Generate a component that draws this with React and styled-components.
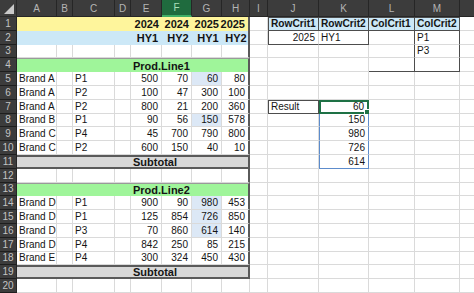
import React from 'react';
import styled, { createGlobalStyle } from 'styled-components';

const GlobalStyle = createGlobalStyle`
  html, body {
    margin: 0;
    padding: 0;
    background: #ffffff;
    overflow: hidden;
  }
  body {
    font-family: "Liberation Sans", Arial, sans-serif;
  }
`;

const COLS = ['A', 'B', 'C', 'D', 'E', 'F', 'G', 'H', 'I', 'J', 'K', 'L', 'M', 'N'];
const WIDTHS = [17, 40, 16, 42, 16, 31, 30, 30, 28, 18, 51, 50, 46, 45, 40];

const YELLOW = '#fef59c';
const BLUE = '#cce8f7';
const GREEN = '#9ff59a';
const GRAY = '#d8d8d8';
const HILITE = '#dce8f6';
const GRID = '1px solid #dadada';
const LINE = '1px solid #4d4d4d';
const THICK = '2px solid #5a5a5a';
const SEL = '2px solid #1e7145';
const RANGE = '1px solid #5d8ccc';

const Sheet = styled.div`
  display: grid;
  grid-template-columns: ${WIDTHS.map(w => `${w}px`).join(' ')};
  grid-template-rows: 17px repeat(20, 13.8px);
  width: 500px;
  font-size: 10px;
  color: #141414;
`;

const Corner = styled.div`
  position: relative;
  background: #3c3c3c;
  border-right: 1px solid #2a2a2a;
  border-bottom: 1px solid #2a2a2a;
  &::after {
    content: '';
    position: absolute;
    right: 2px;
    bottom: 2px;
    border-left: 10px solid transparent;
    border-bottom: 10px solid #c9c9c9;
  }
`;

const ColHead = styled.div`
  display: flex;
  align-items: center;
  justify-content: center;
  background: ${p => (p.$active ? '#1f6b3e' : '#3c3c3c')};
  color: ${p => (p.$active ? '#a9dfb9' : '#b4b4b4')};
  border-right: 1px solid #262626;
  border-bottom: ${p => (p.$active ? '2px solid #3fae66' : '1px solid #262626')};
  font-size: 10px;
  box-sizing: border-box;
`;

const RowHead = styled.div`
  display: flex;
  align-items: center;
  justify-content: center;
  background: #3c3c3c;
  color: #c3c3c3;
  border-right: 1px solid #262626;
  border-bottom: 1px solid #1e1e1e;
  font-size: 10px;
  box-sizing: border-box;
`;

const Cell = styled.div`
  position: relative;
  grid-column: span ${p => p.$span || 1};
  display: flex;
  align-items: center;
  justify-content: ${p => (p.$align === 'right' ? 'flex-end' : p.$align === 'center' ? 'center' : 'flex-start')};
  padding: ${p => (p.$align === 'right' ? '0 3px 0 0' : '0 0 0 2px')};
  background: ${p => p.$bg || '#ffffff'};
  font-weight: ${p => (p.$bold ? 700 : 400)};
  font-size: ${p => p.$size || (p.$bold ? '11px' : '10px')};
  white-space: nowrap;
  overflow: visible;
  box-sizing: border-box;
  border-top: ${p => p.$bt || 'none'};
  border-left: ${p => p.$bl || 'none'};
  border-right: ${p => p.$br || (p.$bg && p.$bg !== HILITE ? 'none' : GRID)};
  border-bottom: ${p => p.$bb || (p.$bg && p.$bg !== HILITE ? 'none' : GRID)};
`;

const Handle = styled.span`
  position: absolute;
  right: -3px;
  bottom: -3px;
  width: 4px;
  height: 4px;
  background: #1e7145;
  border: 1px solid #ffffff;
`;

const blank = (n = 1) => Array.from({ length: n }, () => ({}));

const crit = (t, first) => ({
  t, bold: true, size: '10.2px', bg: BLUE, bt: LINE, br: LINE, bb: LINE, bl: first ? LINE : undefined,
});

const headerRight = {
  1: [crit('RowCrit1', true), crit('RowCrit2'), crit('ColCrit1'), crit('ColCrit2')],
  2: [
    { t: '2025', align: 'right', bl: LINE, bb: LINE },
    { t: 'HY1', br: LINE, bb: LINE },
    { br: LINE },
    { t: 'P1', br: LINE },
  ],
  3: [{}, {}, { br: LINE }, { t: 'P3', br: LINE }],
  4: [{}, {}, { br: LINE, bb: LINE }, { br: LINE, bb: LINE }],
  7: [
    { t: 'Result', bt: LINE, bl: LINE, bb: LINE, br: LINE },
    { t: '60', align: 'right', sel: true, bt: SEL, bl: SEL, br: SEL, bb: SEL },
    {},
    {},
  ],
  8: [{}, { t: '150', align: 'right', bl: RANGE, br: RANGE }, {}, {}],
  9: [{}, { t: '980', align: 'right', bl: RANGE, br: RANGE }, {}, {}],
  10: [{}, { t: '726', align: 'right', bl: RANGE, br: RANGE }, {}, {}],
  11: [{}, { t: '614', align: 'right', bl: RANGE, br: RANGE, bb: RANGE }, {}, {}],
};

const dataRow = ([brand, prod, e, f, g, h], gHi) => [
  { t: brand },
  {},
  { t: prod },
  {},
  { t: e, align: 'right' },
  { t: f, align: 'right' },
  { t: g, align: 'right', bg: gHi ? HILITE : undefined },
  { t: h, align: 'right', br: THICK },
];

const bandRow = (bg, text, borders = {}) => [
  { span: 4, bg, ...borders },
  { span: 4, bg, t: text, bold: true, br: THICK, ...borders },
];

const tableLeft = {
  1: [
    { span: 4, bg: YELLOW },
    { t: '2024', bold: true, align: 'right', bg: YELLOW },
    { t: '2024', bold: true, align: 'right', bg: YELLOW },
    { t: '2025', bold: true, align: 'right', bg: YELLOW },
    { t: '2025', bold: true, align: 'right', bg: YELLOW, br: THICK },
  ],
  2: [
    { span: 4, bg: BLUE },
    { t: 'HY1', bold: true, align: 'center', bg: BLUE },
    { t: 'HY2', bold: true, align: 'center', bg: BLUE },
    { t: 'HY1', bold: true, align: 'center', bg: BLUE },
    { t: 'HY2', bold: true, align: 'center', bg: BLUE, br: THICK },
  ],
  3: [...blank(7), { br: THICK }],
  4: bandRow(GREEN, 'Prod.Line1', { bt: '1px solid #9a9a9a' }),
  5: dataRow(['Brand A', 'P1', '500', '70', '60', '80'], true),
  6: dataRow(['Brand A', 'P2', '100', '47', '300', '100']),
  7: dataRow(['Brand A', 'P2', '800', '21', '200', '360']),
  8: dataRow(['Brand B', 'P1', '90', '56', '150', '578'], true),
  9: dataRow(['Brand C', 'P4', '45', '700', '790', '800']),
  10: dataRow(['Brand C', 'P2', '600', '150', '40', '10']),
  11: bandRow(GRAY, 'Subtotal', { bt: THICK, bb: THICK }),
  12: [...blank(7), { br: THICK }],
  13: bandRow(GREEN, 'Prod.Line2', { bt: '1px solid #9a9a9a' }),
  14: dataRow(['Brand D', 'P1', '900', '90', '980', '453'], true),
  15: dataRow(['Brand D', 'P1', '125', '854', '726', '850'], true),
  16: dataRow(['Brand D', 'P3', '70', '860', '614', '140'], true),
  17: dataRow(['Brand D', 'P4', '842', '250', '85', '215']),
  18: dataRow(['Brand E', 'P4', '300', '324', '450', '430']),
  19: bandRow(GRAY, 'Subtotal', { bt: THICK, bb: THICK }),
  20: blank(8),
};

const rows = Array.from({ length: 20 }, (_, i) => {
  const n = i + 1;
  const left = tableLeft[n];
  const right = headerRight[n] || blank(4);
  return [...left, {}, ...right, {}];
});

const App = () => (
  <>
    <GlobalStyle />
    <Sheet>
      <Corner />
      {COLS.map(c => (
        <ColHead key={c} $active={c === 'F'}>{c === 'N' ? '' : c}</ColHead>
      ))}
      {rows.map((cells, i) => (
        <React.Fragment key={i}>
          <RowHead>{i + 1}</RowHead>
          {cells.map((c, j) => (
            <Cell
              key={j}
              $span={c.span}
              $bg={c.bg}
              $bold={c.bold}
              $size={c.size}
              $align={c.align}
              $bt={c.bt}
              $bb={c.bb}
              $bl={c.bl}
              $br={c.br}
            >
              {c.t}
              {c.sel && <Handle />}
            </Cell>
          ))}
        </React.Fragment>
      ))}
    </Sheet>
  </>
);

export default App;
